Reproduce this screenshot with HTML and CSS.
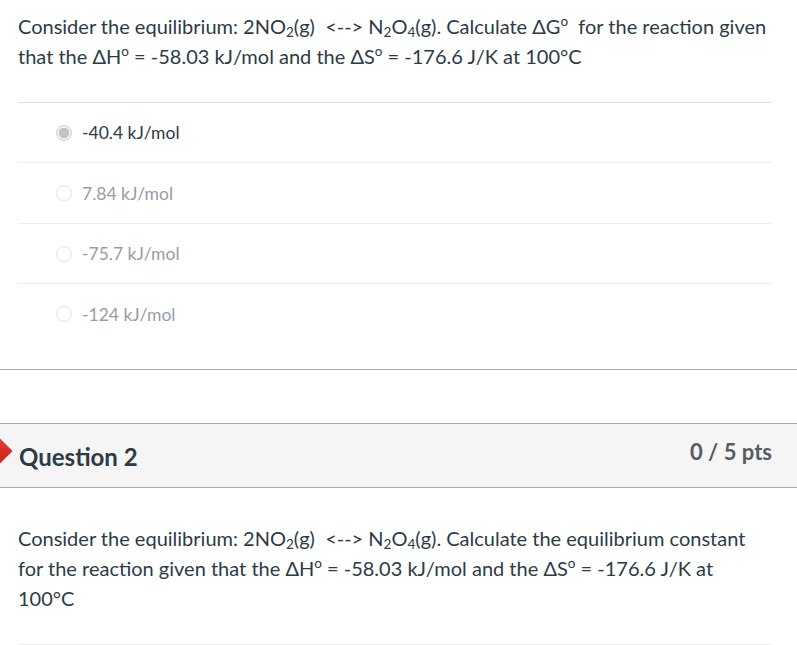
FILE: index.html
```html
<!DOCTYPE html>
<html>
<head>
<meta charset="utf-8">
<link rel="stylesheet" href="styles.css">
</head>
<body>
<div class="question">
  <div class="q-text">Consider the equilibrium: 2NO<sub>2</sub>(g) &nbsp;&lt;--&gt; N<sub>2</sub>O<sub>4</sub>(g). Calculate ΔG<sup>o</sup> &nbsp;for the reaction given that the ΔH<sup>o</sup> = -58.03 kJ/mol and the ΔS<sup>o</sup> = -176.6 J/K at 100°C</div>
  <div class="answers">
    <div class="answer selected"><span class="radio checked"></span><span class="label">-40.4 kJ/mol</span></div>
    <div class="answer tall"><span class="radio"></span><span class="label">7.84 kJ/mol</span></div>
    <div class="answer"><span class="radio"></span><span class="label">-75.7 kJ/mol</span></div>
    <div class="answer tall"><span class="radio"></span><span class="label">-124 kJ/mol</span></div>
  </div>
</div>
<div class="question q2">
  <div class="q-header">
    <span class="marker"></span>
    <span class="q-title">Question 2</span>
    <span class="q-pts">0 / 5 pts</span>
  </div>
  <div class="q-text q2-text">Consider the equilibrium: 2NO<sub>2</sub>(g) &nbsp;&lt;--&gt; N<sub>2</sub>O<sub>4</sub>(g). Calculate the equilibrium constant for the reaction given that the ΔH<sup>o</sup> = -58.03 kJ/mol and the ΔS<sup>o</sup> = -176.6 J/K at 100°C</div>
  <div class="answers-top"></div>
</div>
</body>
</html>
```
FILE: styles.css
```css
html, body {
  margin: 0;
  padding: 0;
  background: #fff;
}
body {
  font-family: Lato, "Open Sans", sans-serif;
  color: #2d3b45;
  width: 797px;
  overflow: hidden;
}
.question {
  border-bottom: 1px solid #aaaaaa;
}
.q-text {
  font-size: 20px;
  line-height: 30px;
  padding: 11px 25px 0 18px;
}
.q-text sub {
  font-size: 13.5px;
  line-height: 0;
  vertical-align: -3px;
}
.q-text sup {
  font-size: 13.5px;
  line-height: 0;
  vertical-align: 8px;
}
.answers {
  margin: 31px 25px 0 18px;
  border-top: 1px solid #dddddd;
  padding-bottom: 25px;
}
.answer {
  display: flex;
  align-items: center;
  height: 59px;
  padding-left: 38px;
  border-bottom: 1px solid #eeeeee;
  font-size: 17.5px;
  color: #959ea5;
}
.answer.tall {
  height: 60px;
}
.answer:last-child {
  border-bottom: none;
}
.answer.selected {
  color: #2d3b45;
}
.radio {
  width: 14px;
  height: 14px;
  border: 1px solid #e4e4e4;
  border-radius: 50%;
  background: #fff;
  margin-right: 10px;
  box-sizing: content-box;
  flex: none;
}
.radio.checked {
  border-color: #cfcfcf;
  background: radial-gradient(circle, #c4c4c4 0 5px, #f0f0f0 5.5px);
}
.q2 {
  margin-top: 53px;
  border-top: 1px solid #aaaaaa;
  border-bottom: none;
}
.q-header {
  position: relative;
  display: flex;
  align-items: center;
  justify-content: space-between;
  height: 63px;
  background: #f5f5f5;
  border-bottom: 1px solid #aaaaaa;
  padding: 0 25px 0 19px;
}
.marker {
  position: absolute;
  left: -14px;
  top: 16px;
  width: 22px;
  height: 22px;
  background: linear-gradient(135deg, #e8403a, #c01f1a);
  transform: rotate(45deg);
}
.q-title {
  font-size: 24px;
  font-weight: bold;
  color: #2d3b45;
  margin-top: 1px;
}
.q-pts {
  font-size: 22px;
  font-weight: bold;
  color: #555c62;
  margin-top: -9px;
}
.q2-text {
  padding-top: 35px;
}
.answers-top {
  margin: 31px 25px 0 18px;
  border-top: 1px solid #eeeeee;
}
```
